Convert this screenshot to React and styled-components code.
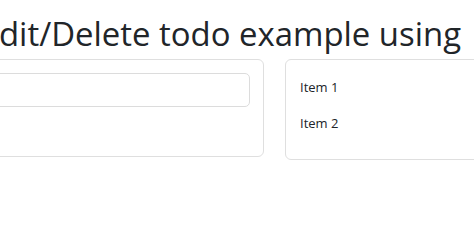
import React, { useState } from "react";
import styled, { createGlobalStyle } from "styled-components";

const GlobalStyle = createGlobalStyle`
  html, body {
    margin: 0;
    padding: 0;
    background: #fff;
    overflow: hidden;
  }
  body {
    font-family: "Open Sans", "Noto Sans", sans-serif;
    color: #212529;
  }
`;

const Page = styled.div`
  display: flex;
  flex-direction: column;
  padding-top: 14px;
  gap: 6px;
`;

const Title = styled.h1`
  margin: 0 0 0 -1px;
  font-size: 32.9px;
  font-weight: 400;
  line-height: 1.2;
  white-space: nowrap;
`;

const Row = styled.div`
  display: grid;
  grid-template-columns: 300px 300px;
  column-gap: 21px;
  margin-left: -36px;
  align-items: start;
`;

const Card = styled.div`
  border: 1px solid #dfdfdf;
  border-radius: 6px;
  background: #fff;
  padding: ${(p) => p.$pad};
`;

const Input = styled.input`
  display: block;
  box-sizing: border-box;
  width: 100%;
  height: 34px;
  border: 1px solid #dcdcdc;
  border-radius: 5px;
  padding: 0 12px;
  font: inherit;
  font-size: 13px;
  outline: none;
`;

const List = styled.ul`
  list-style: none;
  margin: 0;
  padding: 0;
`;

const Item = styled.li`
  padding: 8px 0;
  font-size: 13px;
  line-height: 20px;
`;

export default function App() {
  const [text, setText] = useState("");
  const items = ["Item 1", "Item 2"];

  return (
    <>
      <GlobalStyle />
      <Page>
        <Title>dit/Delete todo example using</Title>
        <Row>
          <Card $pad="13px 13px 49px 14px">
            <Input value={text} onChange={(e) => setText(e.target.value)} />
          </Card>
          <Card $pad="9px 14px 18px 14px">
            <List>
              {items.map((it) => (
                <Item key={it}>{it}</Item>
              ))}
            </List>
          </Card>
        </Row>
      </Page>
    </>
  );
}
